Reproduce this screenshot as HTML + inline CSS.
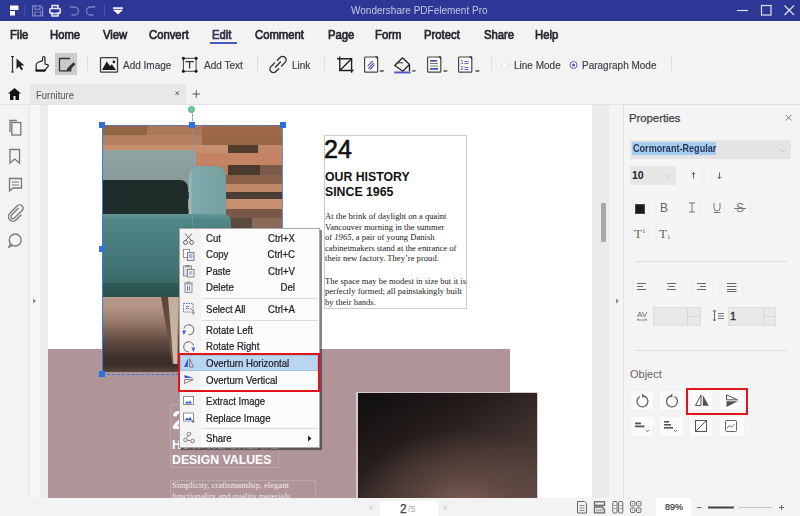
<!DOCTYPE html>
<html><head><meta charset="utf-8">
<style>
*{margin:0;padding:0;box-sizing:border-box}
html,body{width:800px;height:516px;overflow:hidden;background:#f3f3f3;font-family:"Liberation Sans",sans-serif;position:relative}
.a{position:absolute}
svg{position:absolute;overflow:visible}
#title{left:0;top:0;width:800px;height:21px;background:#2c3796}
#ttxt{left:351px;top:4px;color:#c5c9e6;font-size:10px;line-height:12px;white-space:nowrap;transform:scaleY(1.1);transform-origin:0 0}
.mi{position:absolute;top:28px;font-size:11.3px;line-height:12px;color:#26262e;-webkit-text-stroke:0.65px #26262e;white-space:nowrap;transform:scaleY(1.06);transform-origin:0 0}
.tl{position:absolute;top:59px;font-size:10px;line-height:12px;color:#3c3c46;-webkit-text-stroke:0.15px #3c3c46;white-space:nowrap;transform:scaleY(1.12);transform-origin:0 0}
.sep{position:absolute;width:1px;background:#dedede}
#tab{left:30px;top:84px;width:156px;height:20px;background:#e8e8e8}
#side{left:0;top:104px;width:28px;height:394px;background:#f3f3f3}
#sideline{left:28px;top:104px;width:2px;height:394px;background:#ebebeb}
#strip1{left:30px;top:104px;width:10px;height:394px;background:#f6f6f6}
#strip2{left:40px;top:104px;width:8px;height:394px;background:#ececec}
#page{left:48px;top:104px;width:544px;height:394px;background:#fff;overflow:hidden}
#rstrip1{left:592px;top:104px;width:17px;height:394px;background:#ebebeb}
#rstrip2{left:609px;top:104px;width:14px;height:394px;background:#f4f4f4}
#rline{left:623px;top:104px;width:1px;height:394px;background:#e2e2e2}
#props{left:624px;top:104px;width:176px;height:394px;background:#f4f4f4}
#topline{left:0;top:104px;width:800px;height:1px;background:#e2e2e2}
#status{left:0;top:498px;width:800px;height:18px;background:#f3f3f3}
.pl{position:absolute;font-size:11px;line-height:12px;color:#4a4a4a;white-space:nowrap}
.btn{position:absolute;background:#f5f5f5;border:1px solid #efefef}
.wbtn{position:absolute;background:#fbfbfb;box-shadow:0 0 1px 0 #e4e4e4}
.mt{position:absolute;left:206px;font-size:9.6px;line-height:12px;color:#1c1c24;white-space:nowrap;transform:scaleY(1.14);transform-origin:0 0;-webkit-text-stroke:0.2px #1c1c24}
.ms{position:absolute;right:505px;font-size:9.6px;line-height:12px;color:#1c1c24;white-space:nowrap;transform:scaleY(1.14);transform-origin:0 0;-webkit-text-stroke:0.2px #1c1c24}
</style></head><body>
<!-- TITLE BAR -->
<div id="title" class="a"></div>
<div id="ttxt" class="a">Wondershare PDFelement Pro</div>

<!-- MENU -->
<div class="mi" style="left:10px">File</div>
<div class="mi" style="left:50px">Home</div>
<div class="mi" style="left:103px">View</div>
<div class="mi" style="left:149px">Convert</div>
<div class="mi" style="left:212px;color:#3a4bb0">Edit</div>
<div class="a" style="left:210px;top:42px;width:27px;height:2px;background:#4a5bc0"></div>
<div class="mi" style="left:255px">Comment</div>
<div class="mi" style="left:328px">Page</div>
<div class="mi" style="left:375px">Form</div>
<div class="mi" style="left:424px">Protect</div>
<div class="mi" style="left:484px">Share</div>
<div class="mi" style="left:535px">Help</div>

<!-- TOOLBAR -->
<div class="a" style="left:55px;top:53px;width:22px;height:22px;background:#cbcbcb"></div>
<div class="tl" style="left:123px">Add Image</div>
<div class="tl" style="left:204px">Add Text</div>
<div class="tl" style="left:292px">Link</div>
<div class="tl" style="left:514px">Line Mode</div>
<div class="tl" style="left:582px">Paragraph Mode</div>
<div class="sep" style="left:87px;top:56px;height:15px"></div>
<div class="sep" style="left:257px;top:56px;height:15px"></div>
<div class="sep" style="left:324px;top:56px;height:15px"></div>
<div class="sep" style="left:491px;top:56px;height:15px"></div>
<div class="sep" style="left:671px;top:56px;height:15px"></div>

<!-- TABS -->
<div id="tab" class="a"></div>
<div class="a" style="left:36px;top:89px;font-size:9.5px;line-height:11px;color:#555;white-space:nowrap;transform:scaleY(1.1);transform-origin:0 0">Furniture</div>

<!-- LAYOUT -->
<div id="side" class="a"></div>
<div id="sideline" class="a"></div>
<div id="strip1" class="a"></div>
<div id="strip2" class="a"></div>
<div id="page" class="a">
<div class="a" style="left:0;top:245px;width:462px;height:149px;background:#af9498"></div>
<!-- sofa photo -->
<div class="a" style="left:54px;top:21px;width:181px;height:247px;overflow:hidden;background:#a8714c;filter:blur(0.5px)">
<div class="a" style="left:0px;top:0px;width:45px;height:10px;background:#946446"></div>
<div class="a" style="left:45px;top:0px;width:55px;height:10px;background:#a87858"></div>
<div class="a" style="left:100px;top:0px;width:81px;height:10px;background:#a06a4a"></div>
<div class="a" style="left:0px;top:10px;width:100px;height:10px;background:#b4805f"></div>
<div class="a" style="left:100px;top:10px;width:81px;height:10px;background:#9a6648"></div>
<div class="a" style="left:0px;top:20px;width:126px;height:8px;background:#c88f6e"></div>
<div class="a" style="left:126px;top:20px;width:30px;height:8px;background:#523c2e"></div>
<div class="a" style="left:156px;top:20px;width:25px;height:8px;background:#c08866"></div>
<div class="a" style="left:0px;top:28px;width:181px;height:12px;background:#c48464"></div>
<div class="a" style="left:0px;top:40px;width:126px;height:10px;background:#b88060"></div>
<div class="a" style="left:126px;top:40px;width:32px;height:10px;background:#4c3a2e"></div>
<div class="a" style="left:158px;top:40px;width:23px;height:10px;background:#7a5a48"></div>
<div class="a" style="left:0px;top:50px;width:181px;height:9px;background:#8a6048"></div>
<div class="a" style="left:0px;top:59px;width:181px;height:8px;background:#c08a68"></div>
<div class="a" style="left:0px;top:67px;width:181px;height:7px;background:#4c3e36"></div>
<div class="a" style="left:0px;top:74px;width:181px;height:10px;background:#c89070"></div>
<div class="a" style="left:0px;top:84px;width:181px;height:9px;background:#7a5848"></div>
<div class="a" style="left:0px;top:93px;width:150px;height:10px;background:#5a4a40"></div>
<div class="a" style="left:150px;top:93px;width:31px;height:10px;background:#8a6a58"></div>
<div class="a" style="left:0px;top:103px;width:181px;height:22px;background:#7a5a48"></div>
 <div class="a" style="left:0;top:25px;width:94px;height:40px;background:linear-gradient(180deg,#92a4a2,#869896);border-top-right-radius:6px"></div>
 <div class="a" style="left:0;top:55px;width:86px;height:35px;background:#1e2d2a;border-top-right-radius:8px"></div>
 <div class="a" style="left:87px;top:41px;width:37px;height:52px;background:linear-gradient(90deg,#9cc0c0 0,#80aaaa 4px,#75a0a0 100%);border-radius:10px 10px 0 0"></div>
 <div class="a" style="left:0;top:89px;width:129px;height:70px;background:linear-gradient(180deg,#639595 0,#508686 6px,#427676 50px,#3a6a68 100%);border-top-right-radius:8px"></div><div class="a" style="left:129px;top:140px;width:52px;height:19px;background:#3a6a68"></div>
 <div class="a" style="left:0;top:158px;width:181px;height:14px;background:linear-gradient(180deg,#2e5a57,#2a524f)"></div>
 <div class="a" style="left:0;top:172px;width:181px;height:76px;background:linear-gradient(180deg,#ba9a8a 0,#b09282 12px,#8f7262 28px,#5e4a40 45px,#3e302a 60px,#3a2c26 68px,#54443c 74px)"></div>
 <div class="a" style="left:0;top:172px;width:181px;height:76px;clip-path:polygon(59px 0,68px 0,72px 67px,70.5px 67px);background:linear-gradient(180deg,#5a443a,#7a6052)"></div><div class="a" style="left:0;top:172px;width:181px;height:76px;clip-path:polygon(66px 0,76px 0,75.5px 67px,71.5px 67px);background:linear-gradient(180deg,#c4ac9a,#d2bcaa)"></div>
</div>
<!-- selection -->
<div class="a" style="left:54px;top:21px;width:181px;height:250px;border:1px dashed #3b7be0;border-left:1.5px solid #3b7be0;border-right:1px solid #5a8ee6"></div>
<div class="a" style="left:144px;top:6px;width:0;height:15px;border-left:1px dashed #6a9be8"></div>
<div class="a" style="left:144px;top:21px;width:0;height:120px;border-left:1px dashed #6a9be8;opacity:.8"></div>
<div class="a" style="left:140px;top:2px;width:7px;height:7px;border-radius:50%;background:#6fd08a;border:1px solid #5aa0a0"></div>
<div class="a" style="left:51px;top:18px;width:6px;height:6px;background:#2f6fdd"></div>
<div class="a" style="left:141px;top:18px;width:6px;height:6px;background:#2f6fdd"></div>
<div class="a" style="left:232px;top:18px;width:6px;height:6px;background:#2f6fdd"></div>
<div class="a" style="left:51px;top:142px;width:6px;height:6px;background:#2f6fdd"></div>
<div class="a" style="left:51px;top:267px;width:6px;height:6px;background:#2f6fdd"></div>
<!-- text box 24 -->
<div class="a" style="left:276px;top:31px;width:143px;height:174px;border:1px solid #c9cad6"></div>
<div class="a" style="left:276px;top:32px;font-size:25px;line-height:26px;color:#111;-webkit-text-stroke:0.6px #111;letter-spacing:0px">24</div>
<div class="a" style="left:277px;top:66px;font-size:12.3px;line-height:15px;color:#111;font-weight:bold;white-space:nowrap">OUR HISTORY<br>SINCE 1965</div>
<div class="a" style="left:277px;top:107px;font-family:'Liberation Serif',serif;font-size:8.6px;line-height:10.5px;color:#222;white-space:nowrap">At the brink of daylight on a quaint<br>Vancouver morning in the summer<br>of <i>1965</i>, a pair of young Danish<br>cabinetmakers stand at the entrance of<br>their new factory. They’re proud.<br><span style="display:block;height:12px"></span>The space may be modest in size but it is<br>perfectly formed; all painstakingly built<br>by their hands.</div>
<!-- pink text boxes -->
<div class="a" style="left:122px;top:300px;width:109px;height:64px;border:1px solid #bba7aa"></div>
<div class="a" style="left:124px;top:302px;font-size:26px;line-height:28px;color:#fff;font-weight:bold">24</div>
<div class="a" style="left:124px;top:334px;font-size:12.3px;line-height:15px;color:#fff;font-weight:bold;white-space:nowrap">HOW WE CREATE<br>DESIGN VALUES</div>
<div class="a" style="left:122px;top:376px;width:146px;height:40px;border:1px solid #bba7aa"></div>
<div class="a" style="left:124px;top:376px;font-family:'Liberation Serif',serif;font-size:8.6px;line-height:10.5px;color:#f2eaea;white-space:nowrap">Simplicity, craftsmanship, elegant<br>functionality and quality materials</div>
<!-- dark photo -->
<div class="a" style="left:308px;top:288px;width:182px;height:106px;background:#dcc8cc"></div>
<div class="a" style="left:310px;top:289px;width:179px;height:105px;background:radial-gradient(ellipse 110px 75px at 105px 112px,rgba(130,100,90,.85) 0,rgba(110,82,72,.6) 40%,rgba(80,60,54,0) 100%),linear-gradient(150deg,#0f0e0e 0%,#231c1b 35%,#3e302d 65%,#5a4642 100%)"></div>

</div>
<div id="rstrip1" class="a"></div>
<div id="rstrip2" class="a"></div>
<div id="rline" class="a"></div>
<div class="a" style="left:601px;top:203px;width:5px;height:39px;background:#a9a9a9;border-radius:1px"></div>
<div id="props" class="a"></div>
<div id="topline" class="a"></div>
<div id="status" class="a"></div>

<div class="pl" style="left:629px;top:112px;font-size:11.3px;color:#3e3e3e;-webkit-text-stroke:0.25px #3e3e3e">Properties</div>
<svg width="10" height="10" style="left:784px;top:113px"><path d="M1.8 2l5.5 5.5M7.3 2l-5.5 5.5" stroke="#777" stroke-width="1"/></svg>
<div class="a" style="left:630px;top:140px;width:161px;height:19px;background:#e4e4e4"></div>
<div class="a" style="left:632px;top:142px;width:84px;height:13px;background:#a6cdf2"></div>
<div class="a" style="left:633px;top:143px;font-size:10.4px;line-height:12px;color:#2a3550;font-weight:bold;white-space:nowrap;transform:scaleX(0.875);transform-origin:0 0">Cormorant-Regular</div>
<svg width="8" height="5" style="left:779px;top:148px"><path d="M1 1l3 3 3-3" stroke="#c8c8c8" fill="none"/></svg>
<div class="a" style="left:630px;top:166px;width:46px;height:19px;background:#e6e6e6"></div>
<div class="a" style="left:632px;top:169px;font-size:10.5px;line-height:12px;font-weight:bold;color:#222">10</div>
<svg width="8" height="5" style="left:664px;top:173px"><path d="M1 1l3 3 3-3" stroke="#d0d0d0" fill="none"/></svg>
<div class="btn" style="left:685px;top:166px;width:18px;height:19px"></div>
<div class="btn" style="left:711px;top:166px;width:19px;height:19px"></div>
<svg width="10" height="10" style="left:689px;top:170px"><path d="M4.5 2.5v6M2.8 4.2l1.7-1.7 1.7 1.7" stroke="#555" fill="none" stroke-width="0.9"/></svg>
<svg width="10" height="10" style="left:715px;top:170px"><path d="M4.5 2.5v6M2.8 6.8l1.7 1.7 1.7-1.7" stroke="#555" fill="none" stroke-width="0.9"/></svg>
<!-- style buttons -->
<div class="btn" style="left:632px;top:199px;width:17px;height:19px"></div>
<div class="btn" style="left:656px;top:199px;width:18px;height:19px"></div>
<div class="btn" style="left:682px;top:199px;width:18px;height:19px"></div>
<div class="btn" style="left:707px;top:199px;width:18px;height:19px"></div>
<div class="btn" style="left:733px;top:199px;width:18px;height:19px"></div>
<div class="btn" style="left:632px;top:223px;width:17px;height:19px"></div>
<div class="btn" style="left:656px;top:223px;width:18px;height:19px"></div>
<div class="a" style="left:635px;top:204px;width:10px;height:10px;background:#1a1a1a;border:1px solid #444"></div>
<div class="a" style="left:660px;top:202px;font-size:12px;line-height:13px;color:#666">B</div>
<svg width="12" height="12" style="left:686px;top:202px"><path d="M3 1h6M3 10h6M6 1v9" stroke="#777" fill="none" stroke-width="1"/></svg>
<svg width="12" height="12" style="left:711px;top:202px"><path d="M3 1v5a3 3 0 0 0 6 0v-5M2.5 10.5h7" stroke="#777" fill="none" stroke-width="1"/></svg>
<div class="a" style="left:736px;top:202px;font-size:12px;line-height:13px;color:#777">S</div>
<div class="a" style="left:734px;top:208px;width:12px;height:1px;background:#777"></div>
<div class="a" style="left:634px;top:224px;font-family:'Liberation Serif',serif;font-size:13px;line-height:14px;color:#666">T<span style="font-size:7px;vertical-align:5px">1</span></div>
<div class="a" style="left:659px;top:227px;font-family:'Liberation Serif',serif;font-size:13px;line-height:14px;color:#666">T<span style="font-size:7px;vertical-align:-1px">1</span></div>
<div class="a" style="left:635px;top:261px;width:152px;height:1px;background:#dcdcdc"></div>
<!-- align buttons -->
<div class="btn" style="left:632px;top:278px;width:21px;height:19px"></div>
<div class="btn" style="left:661px;top:278px;width:22px;height:19px"></div>
<div class="btn" style="left:692px;top:278px;width:21px;height:19px"></div>
<div class="btn" style="left:721px;top:278px;width:22px;height:19px"></div>
<svg width="800" height="516" style="left:0;top:0">
<g stroke="#666" stroke-width="1">
<path d="M637 283.5h9M637 286.5h6M637 289.5h9"/>
<path d="M667 283.5h9M668.5 286.5h6M667 289.5h9"/>
<path d="M697 283.5h9M700 286.5h6M697 289.5h9"/>
<path d="M727 283.5h9.5M727 286.5h9.5M727 289.5h9.5M727 291.5h9.5"/>
</g>
<text x="637" y="317" font-size="8" fill="#666" font-family="Liberation Sans">AV</text>
<path d="M637 320h10M637 320l2 -1.2M647 320l-2 -1.2" stroke="#777" stroke-width="0.8" fill="none"/>
<path d="M714.5 310v11M713 311.5l1.5-1.5 1.5 1.5M713 319.5l1.5 1.5 1.5-1.5" stroke="#555" stroke-width="0.9" fill="none"/>
<path d="M718 313.5h6M718 316h6M718 318.5h6" stroke="#666" stroke-width="0.9"/>
</svg>
<div class="a" style="left:653px;top:307px;width:48px;height:19px;background:#e8e8e8;border:1px solid #dedede"></div>
<div class="a" style="left:687px;top:308px;width:1px;height:17px;background:#d8d8d8"></div>
<div class="a" style="left:688px;top:316px;width:12px;height:1px;background:#d8d8d8"></div>
<div class="a" style="left:728px;top:307px;width:48px;height:19px;background:#e8e8e8;border:1px solid #dedede"></div>
<div class="a" style="left:763px;top:308px;width:1px;height:17px;background:#d8d8d8"></div>
<div class="a" style="left:764px;top:316px;width:12px;height:1px;background:#d8d8d8"></div>
<div class="a" style="left:730px;top:310px;font-size:11px;line-height:13px;color:#333;-webkit-text-stroke:0.4px #333">1</div>
<div class="a" style="left:635px;top:350px;width:152px;height:1px;background:#dcdcdc"></div>
<div class="pl" style="left:630px;top:368px;font-size:11px;color:#666">Object</div>
<div class="wbtn" style="left:631px;top:391px;width:22px;height:19px"></div>
<div class="wbtn" style="left:660px;top:391px;width:23px;height:19px"></div>
<div class="wbtn" style="left:690px;top:391px;width:22px;height:19px"></div>
<div class="wbtn" style="left:720px;top:391px;width:24px;height:19px"></div>
<div class="wbtn" style="left:631px;top:417px;width:22px;height:19px"></div>
<div class="wbtn" style="left:660px;top:417px;width:23px;height:19px"></div>
<div class="wbtn" style="left:690px;top:417px;width:22px;height:19px"></div>
<div class="wbtn" style="left:720px;top:417px;width:24px;height:19px"></div>
<div class="a" style="left:686px;top:388px;width:62px;height:27px;border:2px solid #e0141b"></div>
<svg width="800" height="516" style="left:0;top:0">
<g stroke="#666" stroke-width="1.3" fill="none">
<path d="M639.8 396.6a5.5 5.5 0 1 0 3.5 -0.6"/>
<path d="M674.6 396.6a5.5 5.5 0 1 1 -3.5 -0.6"/>
</g>
<path d="M642 393.5l2.8 2.5-2.8 1.8z" fill="#666"/>
<path d="M672.4 393.5l-2.8 2.5 2.8 1.8z" fill="#666"/>
<path d="M701 395v10.5h-5.5z" fill="none" stroke="#555" stroke-width="1"/>
<path d="M702.8 395v10.8h6z" fill="#555"/>
<path d="M726.5 394.8l11 5h-11z" fill="none" stroke="#555" stroke-width="1"/>
<path d="M726.5 401.3h11.3l-11.3 5.7z" fill="#555"/>
<g fill="#555">
<rect x="635" y="422.5" width="6" height="1.8"/><rect x="635" y="425.5" width="9.5" height="1.8"/>
<path d="M646 430l1.5 1.5 1.5-1.5" stroke="#555" fill="none" stroke-width="0.8"/>
<rect x="664" y="421" width="5" height="1.6"/><rect x="664" y="424" width="7" height="1.6"/><rect x="664" y="427" width="9" height="1.6"/>
<path d="M674 430l1.5 1.5 1.5-1.5" stroke="#555" fill="none" stroke-width="0.8"/>
</g>
<rect x="695.5" y="420.5" width="11" height="11" fill="none" stroke="#555" stroke-width="1"/>
<path d="M695.5 431.5l11-11" stroke="#555" stroke-width="1"/>
<rect x="725.5" y="420.5" width="11" height="11" rx="1" fill="none" stroke="#666" stroke-width="1"/>
<path d="M727 428l2.5-2.5 2 1.5 3-3" stroke="#666" stroke-width="0.9" fill="none"/>
</svg>


<svg width="800" height="516" style="left:0;top:0">
<path d="M372 505.5l-2 2 2 2" stroke="#aaa" fill="none" stroke-width="1"/>
<path d="M444 505.5l2 2-2 2" stroke="#aaa" fill="none" stroke-width="1"/>
<g stroke="#666" stroke-width="1" fill="none">
<path d="M577.5 501.5h7l2 2v9.5h-9z"/><path d="M579.5 505.5h5M579.5 508h5M579.5 510.5h5" stroke-width="0.8"/>
<rect x="594.5" y="501.8" width="10" height="3.5" stroke-width="1.3"/><path d="M594.5 507v5.8h10v-3l-2-2.8z" stroke-width="1.3"/>
<rect x="612.8" y="501.5" width="4.2" height="11.5" rx="1"/><rect x="618.6" y="501.5" width="4.2" height="11.5" rx="1"/>
<rect x="630.5" y="501.5" width="4.5" height="4.5" rx="1.2"/><rect x="636.5" y="501.5" width="4.5" height="4.5" rx="1.2"/>
<rect x="630.5" y="508" width="4.5" height="4.5" rx="1.2"/><rect x="636.5" y="508" width="4.5" height="4.5" rx="1.2"/>
</g>
<g fill="#999"><rect x="614" y="505" width="2" height="1"/><rect x="614" y="508" width="2" height="1"/><rect x="620" y="505" width="2" height="1"/><rect x="620" y="508" width="2" height="1"/>
<rect x="632" y="503.3" width="1.5" height="1"/><rect x="638" y="503.3" width="1.5" height="1"/><rect x="632" y="509.8" width="1.5" height="1"/><rect x="638" y="509.8" width="1.5" height="1"/>
<rect x="596" y="509" width="7" height="2.5" fill="#bbb"/></g>
<path d="M697 507.5h4.5" stroke="#666" stroke-width="1"/>
<rect x="708" y="506.5" width="27" height="2" fill="#444"/>
<rect x="737" y="507" width="35" height="1" fill="#c8c8c8"/>
<circle cx="736" cy="507.5" r="2" fill="#fff" stroke="#ddd" stroke-width="0.6"/>
<path d="M779 507.5h5M781.5 505v5" stroke="#666" stroke-width="1"/>
</svg>
<div class="a" style="left:380px;top:501px;width:58px;height:15px;background:#fff"></div>
<div class="a" style="left:400px;top:502px;font-size:12px;line-height:14px;color:#444;-webkit-text-stroke:0.3px #444">2</div>
<div class="a" style="left:408px;top:504px;font-size:9px;line-height:11px;color:#aaa">/5</div>
<div class="a" style="left:656px;top:498px;width:35px;height:18px;background:#fff"></div>
<div class="a" style="left:665px;top:502px;font-size:9px;line-height:11px;color:#333;-webkit-text-stroke:0.2px #333">89%</div>


<div class="a" style="left:180px;top:229px;width:141px;height:220px;background:rgba(0,0,0,.12);filter:blur(1.5px)"></div><div class="a" style="left:181px;top:230px;width:141px;height:220px;background:rgba(30,30,30,.5);filter:blur(0.6px)"></div>
<div class="a" style="left:179px;top:228px;width:141px;height:220px;background:#fbfbfb;border:1px solid #a8a8a8"></div>
<div class="a" style="left:180px;top:229px;width:21px;height:218px;background:#f3f3f3"></div>
<div class="a" style="left:202px;top:298px;width:116px;height:1px;background:#dcdcdc"></div>
<div class="a" style="left:202px;top:320px;width:116px;height:1px;background:#dcdcdc"></div>
<div class="a" style="left:202px;top:428px;width:116px;height:1px;background:#dcdcdc"></div>
<div class="a" style="left:180px;top:355px;width:138px;height:16px;background:#b9d5ef;border:1px solid #9fc3e6"></div>
<div class="a" style="left:178px;top:353px;width:142px;height:39px;border:2px solid #e0141b"></div>
<div class="a" style="left:206px;top:232px;font-size:10px;line-height:12px;color:#222;white-space:nowrap">
</div>
<div class="mt" style="top:232px">Cut</div><div class="ms" style="top:232px">Ctrl+X</div>
<div class="mt" style="top:248px">Copy</div><div class="ms" style="top:248px">Ctrl+C</div>
<div class="mt" style="top:264.5px">Paste</div><div class="ms" style="top:264.5px">Ctrl+V</div>
<div class="mt" style="top:281px">Delete</div><div class="ms" style="top:281px">Del</div>
<div class="mt" style="top:302.5px">Select All</div><div class="ms" style="top:302.5px">Ctrl+A</div>
<div class="mt" style="top:323.5px">Rotate Left</div>
<div class="mt" style="top:340px">Rotate Right</div>
<div class="mt" style="top:357px">Overturn Horizontal</div>
<div class="mt" style="top:373.5px">Overturn Vertical</div>
<div class="mt" style="top:394.5px">Extract Image</div>
<div class="mt" style="top:411.5px">Replace Image</div>
<div class="mt" style="top:432px">Share</div>
<svg width="800" height="516" style="left:0;top:0">
<path d="M308 435.5l3.5 3-3.5 3z" fill="#222"/>
<!-- cut -->
<g stroke="#666" stroke-width="1" fill="none">
<path d="M185 233.5l7 7.5M192 233.5l-7 7.5"/>
<circle cx="185.5" cy="242.5" r="2"/><circle cx="191.5" cy="242.5" r="2"/>
</g>
<!-- copy -->
<rect x="183.5" y="249.5" width="6" height="8" fill="#fff" stroke="#888" stroke-width="0.9"/>
<rect x="187.5" y="252.5" width="6.5" height="8" fill="#e6ecf8" stroke="#777" stroke-width="0.9"/>
<path d="M189 255h3.5M189 257h3.5" stroke="#4a5ac0" stroke-width="0.8"/>
<!-- paste -->
<rect x="183.5" y="266" width="8" height="10" fill="#ddd" stroke="#888" stroke-width="0.9"/>
<rect x="185.5" y="265" width="4" height="2" fill="#888"/>
<rect x="187.5" y="269.5" width="6.5" height="7.5" fill="#fff" stroke="#777" stroke-width="0.9"/>
<path d="M189 272h3.5M189 274h3.5" stroke="#4a5ac0" stroke-width="0.8"/>
<!-- delete -->
<path d="M184 283h9M187 283v-1h3v1" stroke="#888" stroke-width="0.9" fill="none"/>
<rect x="185" y="284" width="7" height="8.5" fill="#f4f4f4" stroke="#888" stroke-width="0.9"/>
<path d="M187.5 286v5M189.5 286v5" stroke="#4a5ac0" stroke-width="0.8"/>
<!-- select all -->
<rect x="183.5" y="303.5" width="9.5" height="8.5" fill="none" stroke="#4a6ad0" stroke-width="0.9" stroke-dasharray="1.5 1"/>
<path d="M186 306.5h3M186 308.5h3" stroke="#4a5ac0" stroke-width="0.8"/>
<path d="M190 308l4.5 4.5-2 0.3 1.2 2" stroke="#666" stroke-width="0.8" fill="#fff"/>
<!-- rotate left -->
<path d="M188.7 334.8A5 5 0 1 0 183.9 328.6" stroke="#777" stroke-width="1.1" fill="none"/>
<path d="M182.3 330.5h3.8l-2.3 4.5z" fill="#3a5ad0"/>
<!-- rotate right -->
<path d="M188.7 351.8A5 5 0 1 1 193.5 345.6" stroke="#777" stroke-width="1.1" fill="none"/>
<path d="M191.3 347.5h3.8l-1.5 4.5z" fill="#3a5ad0"/>
<!-- overturn h -->
<path d="M188 358.5v8.5h-4z" fill="#3a5ad0"/>
<path d="M189.5 358.5v8.5h4z" fill="none" stroke="#777" stroke-width="0.9"/>
<!-- overturn v -->
<path d="M184.5 375l9 3h-9z" fill="#3a5ad0"/>
<path d="M184.5 379.5h9l-9 4z" fill="none" stroke="#777" stroke-width="0.9"/>
<!-- extract -->
<rect x="183.5" y="396.5" width="10" height="8" fill="#fff" stroke="#888" stroke-width="0.9"/>
<path d="M185 403.5l2-2.5 1.5 1.5 1.5-2 2 3z" fill="#3a5ad0"/>
<!-- replace -->
<rect x="183.5" y="413" width="10" height="8" fill="#fff" stroke="#888" stroke-width="0.9"/>
<path d="M185 420l2-2.5 1.5 1.5 1.5-2 2 3z" fill="#3a5ad0"/>
<path d="M193 420v3M191.5 421.5h3" stroke="#3a5ad0" stroke-width="0.8"/>
<!-- share -->
<g stroke="#777" stroke-width="0.9" fill="none">
<circle cx="189" cy="434" r="1.8"/><circle cx="185.5" cy="440" r="1.8"/><circle cx="192.5" cy="441" r="1.8"/>
<path d="M188.2 435.6l-1.8 2.7M187.3 440.3l3.4 0.4"/>
</g>
</svg>


<svg width="800" height="516" viewBox="0 0 800 516" style="left:0;top:0">
<!-- title bar icons -->
<rect x="10" y="5.5" width="8.5" height="4.5" fill="#fff"/>
<rect x="10" y="11" width="5" height="4.5" fill="#fff"/>
<line x1="24.5" y1="5" x2="24.5" y2="16" stroke="#4550a5" stroke-width="1"/>
<g fill="none" stroke="#7a82c2" stroke-width="1.2">
<path d="M32.6 5.8h8l2 2v8h-10z"/><path d="M35 5.8v3.5h5v-3.5"/><path d="M35 16v-4h6v4"/>
</g>
<g fill="none" stroke="#e8eaf6" stroke-width="1.5">
<path d="M52 8.5v-3h6v3"/><rect x="49.8" y="8.5" width="10.5" height="5" rx="1.5"/><path d="M52 12v4h6v-4"/>
</g>
<g fill="none" stroke="#7a82c2" stroke-width="1.3">
<path d="M71 7.5l-1 -1.5M70.5 7h4a4 4 0 0 1 0 8h-3"/>
<path d="M94 7.5l1 -1.5M94.5 7h-4a4 4 0 0 0 0 8h3"/>
</g>
<line x1="104.5" y1="5" x2="104.5" y2="16" stroke="#4a55aa" stroke-width="1"/>
<rect x="113" y="7.3" width="10" height="1.6" fill="#fff"/>
<path d="M113 9.8h10l-5 4.8z" fill="#fff"/>
<g stroke="#e0e2f2" stroke-width="1.2" fill="none">
<line x1="737" y1="10.5" x2="748" y2="10.5"/>
<rect x="761.5" y="5.5" width="9.5" height="9.5"/>
<path d="M784.5 5.5l9.5 9.5M794 5.5l-9.5 9.5"/>
</g>

<!-- toolbar icons -->
<g stroke="#333" stroke-width="1.2" fill="none">
<path d="M12.5 56.5v15.5M11 56.5h3M11 72h3"/>
</g>
<path d="M16.5 58.5v10.5l2.5-2.5 2.3 3.8 1.8-1-2.3-3.8h3.7z" fill="#222"/>
<path d="M36.2 70.5V65Q36.2 62.8 38.2 62.2L42.6 60.6V57.6Q42.6 56.5 43.8 56.5Q45 56.5 45 57.6V64L47.4 64.6Q48.9 65.3 48 66.6L45.3 69.6V70.5Z" stroke="#222" stroke-width="1.2" fill="none" stroke-linejoin="round"/>
<rect x="35.6" y="69.5" width="9.6" height="2.2" fill="#111"/>
<g stroke="#333" stroke-width="1.3" fill="none" stroke-linejoin="round">
<path d="M70.8 65.5v5.3h-11.3v-12.3h10.5"/>
</g>
<path d="M66.6 71.2l0.6-2.6 6.3-6.3 2 2-6.3 6.3z" fill="#333"/>
<g>
<rect x="100.5" y="57.6" width="17" height="14.6" rx="0.8" fill="none" stroke="#3a3a3a" stroke-width="1.3"/>
<path d="M102 70l4.7-8.6 3.3 4.6 1.8-1.8 4.2 5.8z" fill="#1a1a1a"/>
<circle cx="113.9" cy="61.9" r="1.3" fill="#1a1a1a"/>
</g>
<g>
<rect x="183.4" y="58.3" width="12.7" height="13" fill="none" stroke="#444" stroke-width="1"/>
<circle cx="183.4" cy="58.3" r="1.5" fill="#111"/><circle cx="196.1" cy="58.3" r="1.5" fill="#111"/>
<circle cx="183.4" cy="71.3" r="1.5" fill="#111"/><circle cx="196.1" cy="71.3" r="1.5" fill="#111"/>
<path d="M185.4 61.6h8.4M189.6 61.6v7" stroke="#333" stroke-width="1.3" fill="none"/>
</g>
<g stroke="#333" stroke-width="1.4" fill="none" stroke-linecap="round" transform="rotate(-45 278 64.5)">
<path d="M276.5 61h-5a3.5 3.5 0 0 0 0 7h4"/>
<path d="M279.5 68h5a3.5 3.5 0 0 0 0 -7h-4"/>
<path d="M274.5 64.5h7"/>
</g>
<g stroke="#222" stroke-width="1.4" fill="none">
<path d="M339.8 56.5v14h13.8"/><path d="M337 58.8h14.6v14"/><path d="M339.8 70.5l11.8-11.7"/>
</g>
<g>
<rect x="364.6" y="57" width="13" height="15.2" rx="0.8" fill="#fff" stroke="#444" stroke-width="1.2"/>
<path d="M375 56.5h2.7v2.7z" fill="#222"/>
<path d="M367.6 66.2l5-5.2M368.3 68.6l5.5-5.8M370 69.5l4.5-4.8" stroke="#4a56c0" stroke-width="1.1"/>
<rect x="379.8" y="70.3" width="3.9" height="1.3" fill="#333"/>
</g>
<g>
<path d="M402.5 57.8L409.5 64.5V71.3M409.5 64.5L402.8 71.2L394.8 65.5L402.5 57.8" fill="none" stroke="#222" stroke-width="1.3"/>
<path d="M396.5 62.8h6.5" stroke="#333" stroke-width="1"/>
<rect x="394.2" y="71.5" width="16.3" height="1.9" fill="#4a56c0"/>
<rect x="412.3" y="70.2" width="3.2" height="1.3" fill="#333"/>
</g>
<g>
<rect x="427.6" y="57" width="13.2" height="15.2" rx="0.8" fill="#fff" stroke="#444" stroke-width="1.2"/><path d="M438.2 56.5h2.7v2.7z" fill="#222"/>
<rect x="430" y="60" width="7" height="1.8" fill="#4a5ac0"/>
<rect x="430" y="63" width="8" height="1" fill="#777"/><rect x="430" y="65.5" width="8" height="1" fill="#777"/>
<rect x="430" y="68" width="8" height="1.8" fill="#4a5ac0"/>
<rect x="443.5" y="70.3" width="3.8" height="1.3" fill="#333"/>
</g>
<g>
<rect x="458.6" y="57" width="13.2" height="15.2" rx="0.8" fill="#fff" stroke="#444" stroke-width="1.2"/><path d="M469.2 56.5h2.7v2.7z" fill="#222"/>
<text x="460.5" y="64" font-size="5" font-weight="bold" fill="#4a5ac0" font-family="Liberation Sans">1</text>
<text x="460.5" y="70" font-size="5" font-weight="bold" fill="#4a5ac0" font-family="Liberation Sans">2</text>
<rect x="464.5" y="61" width="4" height="0.9" fill="#4a5ac0"/><rect x="464.5" y="63" width="4" height="0.9" fill="#4a5ac0"/>
<rect x="464.5" y="67" width="4" height="0.9" fill="#4a5ac0"/><rect x="464.5" y="69" width="4" height="0.9" fill="#4a5ac0"/>
<rect x="475.5" y="70.3" width="3.8" height="1.3" fill="#333"/>
</g>
<circle cx="504.5" cy="65" r="3.2" fill="#fff" stroke="#e2e2e2" stroke-width="1"/>
<circle cx="573.5" cy="65" r="3.5" fill="#fff" stroke="#4a5ac0" stroke-width="1"/>
<circle cx="573.5" cy="65" r="1.5" fill="#4a5ac0"/>

<!-- tabs -->
<path d="M14.5 88l-6.5 5.5h2v6.5h3.5v-4h2v4h3.5v-6.5h2z" fill="#111"/>
<path d="M175.5 91.5l3.5 3.5M179 91.5l-3.5 3.5" stroke="#555" stroke-width="1"/>
<path d="M192.5 94h7.5M196.25 90.25v7.5" stroke="#555" stroke-width="1"/>

<!-- left sidebar icons -->
<g stroke="#787878" stroke-width="1.3" fill="none">
<path d="M10 132v-11.5h7"/><rect x="11.8" y="122.5" width="9" height="12.5"/>
<path d="M10 149.5h9.5v13.5l-4.75 -4 -4.75 4z"/>
<path d="M9.5 178.5h12v9.5h-8.5l-3.5 3z"/><path d="M12 182h7M12 185h7" stroke-width="1"/>
<path d="M18.5 208l-7 7a2 2 0 0 0 3 3l7.5-7.5a3.3 3.3 0 0 0 -4.7 -4.7l-7.5 7.5a4.5 4.5 0 0 0 6.5 6.5l5-5"/>
<circle cx="15.2" cy="240" r="6"/><path d="M10.5 244l-1.8 3.2 3.5 -1.5"/>
</g>
<path d="M33 298.5l3 2.5-3 2.5z" fill="#888"/>
<path d="M616 298.5l3 2.5-3 2.5z" fill="#888"/>
</svg>

</body></html>
